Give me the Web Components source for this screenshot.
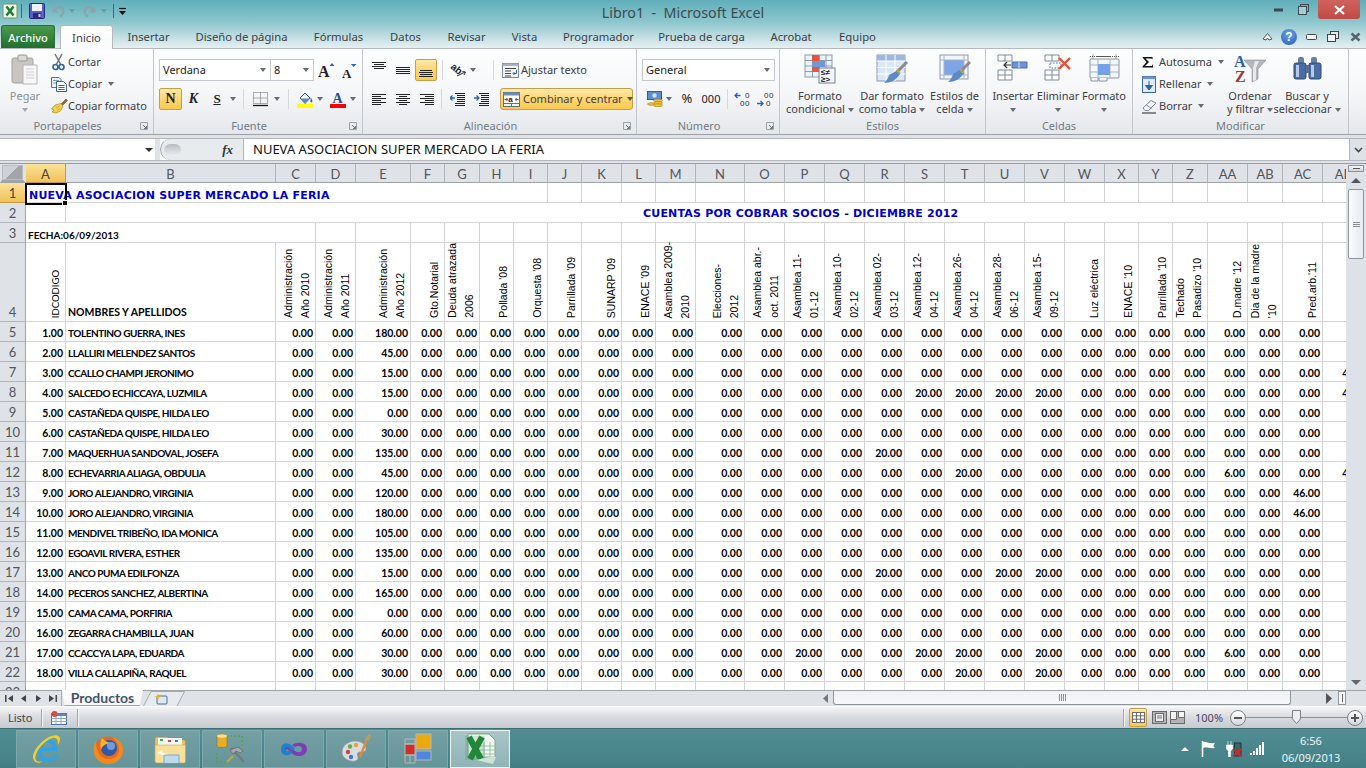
<!DOCTYPE html>
<html lang="es">
<head>
<meta charset="utf-8">
<title>Libro1 - Microsoft Excel</title>
<style>
html, body { margin: 0; padding: 0; height: 100%; overflow: hidden; background: #4d8a90; }
body { font-family: "Noto Sans", sans-serif; }
</style>
</head>
<body>
<x-window></x-window>
<script>
const svg = (w, h, body) => `<svg width="${w}" height="${h}" viewBox="0 0 ${w} ${h}" xmlns="http://www.w3.org/2000/svg" style="flex:none">${body}</svg>`;
const lines = (arr, c = '#222') => arr.map(l => `<path d="M${l[0]} ${l[1]}.5H${l[2]}" stroke="${c}"/>`).join('');

const ICONS = {
    xlsSmall: svg(16, 16, `<rect x="1" y="1" width="14" height="14" rx="1" fill="#eef5ea" stroke="#6f9c62"/><path d="M4.5 3.5 11.5 12.5M11.5 3.5 4.5 12.5" stroke="#1d7a2e" stroke-width="2.4"/>`),
    save: svg(16, 16, `<rect x="0.5" y="0.5" width="15" height="15" rx="1" fill="#5a5fc2" stroke="#26287a"/><rect x="3" y="1" width="10" height="7" fill="#eef1fb"/><rect x="4" y="10" width="8" height="5" fill="#2a2c80"/><rect x="9.5" y="11" width="2" height="3" fill="#c8cbee"/>`),
    undo: svg(13, 14, `<path d="M3 6C5.500 2 10 2 11 6 12 9 10 11.500 8 12.500" fill="none" stroke="#8ba4ab" stroke-width="2.400"/><path d="M0.5 2V8.500H6.500Z" fill="#8ba4ab"/>`),
    redo: svg(13, 14, `<path d="M10 6C7.500 2 3 2 2 6 1 9 3 11.500 5 12.500" fill="none" stroke="#8ba4ab" stroke-width="2.400"/><path d="M12.500 2V8.500H6.500Z" fill="#8ba4ab"/>`),
    qat: svg(9, 9, `<path d="M1 1.5H8" stroke="#111" stroke-width="1.2"/><path d="M1 4H8L4.5 8Z" fill="#111"/>`),
    paste: svg(28, 32, `<rect x="1" y="4" width="21" height="25" rx="2" fill="#c9c6c2" stroke="#a5a29e"/><rect x="7" y="1" width="9" height="6" rx="1" fill="#dcdad7" stroke="#9c9a97"/><path d="M12 11H26V30H12Z" fill="#f7f7f7" stroke="#b5b5b5"/><path d="M15 15H23M15 18H23M15 21H23M15 24H23" stroke="#cfcfcf"/>`),
    cut: svg(15, 18, `<path d="M4 1 9.5 11M11 1 5.5 11" stroke="#6d7480" stroke-width="1.5"/><circle cx="4.5" cy="14" r="2.5" fill="none" stroke="#2e62ad" stroke-width="1.7"/><circle cx="10.5" cy="14" r="2.5" fill="none" stroke="#2e62ad" stroke-width="1.7"/>`),
    copy: svg(16, 16, `<path d="M0.5 1.5H8L10 3.5V11.5H0.5Z" fill="#eef3fb" stroke="#4d74b3"/><path d="M2 4.5H8M2 7H8" stroke="#7d9bcb"/><path d="M5.5 5.5H12.5L15.5 8.5V15.5H5.5Z" fill="#fff" stroke="#3b66ad"/><path d="M7.5 9.5H13.5M7.5 11.5H13.5M7.5 13.5H13.5" stroke="#3b66ad"/>`),
    brush: svg(17, 16, `<path d="M10 6 15 1 16.5 2.5 11.5 7.5Z" fill="#8b6a3a" stroke="#6a4d23" stroke-width=".5"/><path d="M4 7 10 5.5 12 8 9.5 13 5 15 1 14 3 12 0.5 11Z" fill="#f4d24c" stroke="#a98a23" stroke-width=".7"/><path d="M5 10 8.5 8M6 12.5 9.5 10" stroke="#b99a2a" stroke-width=".7"/>`),
    grow: svg(17, 16, `<text x="0" y="15" font-family="Liberation Serif" font-weight="700" font-size="16" fill="#222">A</text><path d="M11.5 4 14 1 16.500 4Z" fill="#2e62ad"/>`),
    shrink: svg(15, 15, `<text x="0" y="14.500" font-family="Liberation Serif" font-weight="700" font-size="13" fill="#222">A</text><path d="M9 1H14.500L11.700 4Z" fill="#2e62ad"/>`),
    borders: svg(15, 15, `<path d="M.5 .5H14.500V11.500H.5ZM7.500 .5V11.500M.5 6H14.500" fill="none" stroke="#666" stroke-dasharray="1 1"/><path d="M0 13.500H15" stroke="#111" stroke-width="1.300"/>`),
    fill: svg(17, 17, `<path d="M3 7 8 2 13 7 8 12.500Z" fill="#f4f5f7" stroke="#3e5f8f"/><path d="M3.500 7.500H12.500L8 12Z" fill="#5c88c5"/><path d="M13.500 6.500C15 8.500 16 9.500 15 11 14 12 13 11 13.500 9.500Z" fill="#2e62ad"/><rect x="0" y="13" width="16" height="4" fill="#ffff00"/>`),
    fontcolor: svg(17, 17, `<text x="2.500" y="12" font-family="Liberation Serif" font-weight="700" font-size="14" fill="#254d8f">A</text><rect x="0" y="13" width="16" height="4" fill="#f00"/>`),
    alTop: svg(14, 9, lines([[0, 0, 14], [2, 2, 12], [0, 4, 14], [2, 6, 12]])),
    alMid: svg(14, 8, lines([[0, 1, 14], [0, 3, 14], [0, 5, 14], [0, 7, 14]])),
    alBot: svg(14, 8, lines([[1, 1, 13], [0, 3, 14], [1, 5, 13], [0, 7, 14]])),
    left: svg(14, 11, lines([[0, 0, 14], [0, 2, 9], [0, 4, 14], [0, 6, 9], [0, 8, 14], [0, 10, 9]])),
    center: svg(14, 11, lines([[0, 0, 14], [3, 2, 11], [0, 4, 14], [3, 6, 11], [0, 8, 14], [3, 10, 11]])),
    right: svg(14, 11, lines([[0, 0, 14], [5, 2, 14], [0, 4, 14], [5, 6, 14], [0, 8, 14], [5, 10, 14]])),
    outdent: svg(15, 13, lines([[5, 0, 15], [7, 2, 15], [7, 4, 15], [7, 6, 15], [7, 8, 15], [5, 10, 15], [5, 12, 15]]) + `<path d="M0 5H5M2.500 2.500 0 5 2.500 7.500" fill="none" stroke="#2e62ad" stroke-width="1.300"/>`),
    indent: svg(15, 13, lines([[5, 0, 15], [7, 2, 15], [7, 4, 15], [7, 6, 15], [7, 8, 15], [5, 10, 15], [5, 12, 15]]) + `<path d="M0 5H5M2.500 2.500 5 5 2.500 7.500" fill="none" stroke="#2e62ad" stroke-width="1.300"/>`),
    orient: svg(18, 16, `<text x="1" y="9" transform="rotate(40 5 6)" font-family="Liberation Sans" font-weight="700" font-size="10" fill="#222">ab</text><path d="M7 14 15 10M12.500 9.500 15.500 10 14 13" fill="none" stroke="#333" stroke-width="1"/>`),
    wrap: svg(17, 15, `<rect x=".5" y=".5" width="16" height="14" fill="#f4f6f9" stroke="#7f8892"/><path d="M.5 .5H16.500V3H.5Z" fill="#a9b3bf"/><path d="M3 5.500H14M3 8H9M3 10.500H9M3 13H9" stroke="#444"/><path d="M14.500 7V10.500H11.500M12.500 9 11 10.500 12.500 12" fill="none" stroke="#2e62ad"/>`),
    merge: svg(17, 15, `<rect x=".5" y=".5" width="16" height="14" fill="#fdfdfd" stroke="#66707c"/><path d="M.5 .5H16.500V3.500H.5Z" fill="#6b8bb9"/><path d="M.5 11.500H16.500M8.500 11.500V14.500" stroke="#66707c"/><text x="5.300" y="10" font-family="Liberation Sans" font-weight="700" font-size="8" fill="#222">a</text><path d="M1.500 7.500H4.500M12.500 7.500H15.500M3.500 6 4.500 7.500 3.500 9M13.500 6 12.500 7.500 13.500 9" fill="none" stroke="#444" stroke-width=".9"/>`),
    currency: svg(17, 16, `<rect x=".5" y=".5" width="14" height="8" fill="#5b8fd0" stroke="#2f5e9f"/><circle cx="7.500" cy="4.500" r="2.200" fill="#cfe0f6"/><ellipse cx="11" cy="9.500" rx="4.500" ry="1.500" fill="#f0c33c" stroke="#a57f12" stroke-width=".6"/><ellipse cx="11" cy="12" rx="4.500" ry="1.500" fill="#f0c33c" stroke="#a57f12" stroke-width=".6"/><ellipse cx="11" cy="14.300" rx="4.500" ry="1.500" fill="#f0c33c" stroke="#a57f12" stroke-width=".6"/><ellipse cx="4" cy="13" rx="3.500" ry="1.300" fill="#f0c33c" stroke="#a57f12" stroke-width=".6"/>`),
    decUp: svg(19, 16, `<path d="M1 4.500H6.500M3.500 2 1 4.500 3.500 7" fill="none" stroke="#2e62ad" stroke-width="1.300"/><text x="11" y="7" font-family="Liberation Sans" font-size="8" fill="#333">0</text><text x="6" y="15" font-family="Liberation Sans" font-size="8" letter-spacing=".5" fill="#333">00</text>`),
    decDown: svg(19, 16, `<text x="8" y="7" font-family="Liberation Sans" font-size="8" letter-spacing=".5" fill="#333">00</text><path d="M1 12.500H7M4.500 10 7 12.500 4.500 15" fill="none" stroke="#2e62ad" stroke-width="1.300"/><text x="10" y="15" font-family="Liberation Sans" font-size="8" fill="#333">0</text>`),
    cond: svg(32, 30, `<rect x="1" y="1" width="27" height="22" fill="#eef3fa" stroke="#8b9bb2"/><path d="M8.500 1V23M15.500 1V23M22 1V23M1 6.500H28M1 12H28M1 17.500H28" stroke="#8b9bb2"/><rect x="8" y="1" width="7" height="6" fill="#e8533c"/><rect x="8" y="7" width="13" height="6" fill="#6f98d8"/><rect x="8" y="13" width="7" height="5" fill="#e8533c"/><rect x="15" y="14" width="16" height="15" fill="#f3f5f7" stroke="#7a8290"/><text x="17" y="21" font-family="Liberation Sans" font-size="8" font-weight="700" fill="#222">≤≠</text><text x="17" y="28" font-family="Liberation Sans" font-size="8" font-weight="700" fill="#222">≥&gt;</text>`),
    table: svg(32, 30, `<rect x="1" y="1" width="28" height="26" fill="#dbe6f6" stroke="#8b9bb2"/><path d="M1 1H29V7H1Z" fill="#9db8e0"/><path d="M10 1V27M19 1V27M1 7H29M1 13.500H29M1 20H29" stroke="#fff"/><path d="M31 8 21 18" stroke="#8a8a8a" stroke-width="3"/><path d="M22 16 13 21C12 25 10 27 8 29 15 29 20 26 24 20Z" fill="#5d89c7"/><path d="M21 16 24 20" stroke="#c4a24a" stroke-width="2"/>`),
    styles: svg(32, 30, `<rect x="1" y="1" width="28" height="24" fill="#f2f5fa" stroke="#8b9bb2"/><rect x="5" y="6" width="20" height="15" fill="#7fa5e6"/><path d="M1 6H29M1 21H29M5 1V25M25 1V25" stroke="#a9b6c9"/><path d="M31 8 22 17" stroke="#8a8a8a" stroke-width="3"/><path d="M22 15 14 20C13 24 11 26 9 28 16 28 21 25 25 19Z" fill="#5d89c7"/><path d="M21 15 24 19" stroke="#c4a24a" stroke-width="2"/>`),
    insert: svg(32, 28, `<path d="M1 1H15V7H1ZM8 1V7M1 16H15V26H1ZM8 16V26M1 21H15" fill="#fff" stroke="#7f8b99"/><path d="M15 8H30V14H15Z" fill="#6e93d6" stroke="#4a6eab"/><path d="M22 8V14" stroke="#dbe5f6"/><path d="M7 11H14M10 8 7 11 10 14" fill="none" stroke="#333" stroke-width="1.200"/>`),
    remove: svg(28, 28, `<path d="M1 1H15V7H1ZM8 1V7M1 16H15V26H1ZM8 16V26M1 21H15" fill="#fff" stroke="#7f8b99"/><path d="M6 9H17V14H6Z" fill="none" stroke="#4a6eab" stroke-dasharray="1.500 1.500"/><path d="M15 4 26 15M26 4 15 15" stroke="#ef4b2f" stroke-width="2.400"/>`),
    format: svg(31, 28, `<path d="M1 2.500H30M4 .5V5M27 .5V5" stroke="#555" stroke-dasharray="1 1"/><path d="M8 2.500H22" stroke="#555"/><rect x="1" y="5" width="29" height="19" rx="1" fill="#f3f6fb" stroke="#8b95a3"/><path d="M9 5V24M21 5V24M1 11H30M1 18H30" stroke="#a9b3c0"/><rect x="9" y="10" width="12" height="11" fill="#75a1e6"/><path d="M2 24V27H9V24M10 24V27H18V24" fill="#f3f6fb" stroke="#8b95a3"/>`),
    sigma: svg(12, 12, `<path d="M1 1H10.500V3.500L9.500 2.500H3.500L7 6 3 10H10L11 8V11.500H.5V10.500L4.500 6 .5 1.500Z" fill="#111"/>`),
    rellenar: svg(14, 17, `<rect x=".5" y=".5" width="13" height="16" fill="#dfeafa" stroke="#3c66ab"/><path d="M.5 .5H13.500V3H.5Z" fill="#6e93d6"/><path d="M7 5V10M3.500 9.500H10.500L7 14Z" fill="#2e62ad" stroke="#2e62ad"/>`),
    eraser: svg(15, 15, `<path d="M1 9 9 1.500 14 4 6.500 11.500H3Z" fill="#f4f5f8" stroke="#7c8797"/><path d="M4.500 6 9.500 9.500" stroke="#7c8797"/><path d="M0 14H14" stroke="#222"/>`),
    sort: svg(32, 30, `<text x="0" y="13" font-family="Liberation Serif" font-weight="700" font-size="16" fill="#2a5dab">A</text><text x="1" y="28" font-family="Liberation Serif" font-weight="700" font-size="16" fill="#a03a32">Z</text><path d="M10 6H32L24 15V25L18 28V15Z" fill="#b3b6ba" stroke="#8d9094" stroke-width=".6"/><path d="M21 7 25 7 22 14V26L19 27V14Z" fill="#e8e9eb"/>`),
    binoculars: svg(29, 27, `<rect x="5" y="3" width="6" height="7" rx="2" fill="#6b7fa4"/><rect x="18" y="3" width="6" height="7" rx="2" fill="#6b7fa4"/><rect x="1" y="9" width="12" height="16" rx="2" fill="#4a6da6" stroke="#2d4a7d"/><rect x="16" y="9" width="12" height="16" rx="2" fill="#4a6da6" stroke="#2d4a7d"/><rect x="3" y="11" width="3" height="12" fill="#b8cbe6"/><rect x="18" y="11" width="3" height="12" fill="#b8cbe6"/><rect x="13" y="11" width="3" height="8" fill="#5a6f93"/>`),
    launcher: svg(8, 8, `<path d="M.5 .5H7.500V7.500H.5Z" fill="none" stroke="#9aa2ab"/><path d="M3 3 6.500 6.500M6.500 4V6.500H4" fill="none" stroke="#6d7580"/>`),
    macro: svg(17, 14, `<rect x=".5" y="2.500" width="15" height="11" fill="#fff" stroke="#4a6eab"/><path d="M.5 2.500H15.500V5H.5Z" fill="#5c86c8"/><path d="M5 5V13.500M10 5V13.500M.5 7.500H15.500M.5 10.500H15.500" stroke="#8ba7d3"/><circle cx="3.500" cy="3" r="3" fill="#d94b3a"/>`),
    viewNormal: svg(13, 11, `<rect x=".5" y=".5" width="12" height="10" fill="#fff" stroke="#6a6a6a"/><path d="M4.500 .5V10.500M8.500 .5V10.500M.5 3.800H12.500M.5 7.200H12.500" stroke="#6a6a6a"/>`),
    viewLayout: svg(15, 13, `<rect x=".5" y=".5" width="14" height="12" fill="#b5b5b5" stroke="#6a6a6a"/><rect x="3.500" y="2.500" width="8" height="8" fill="#eee" stroke="#6a6a6a"/><path d="M5 5H10M5 7H10" stroke="#777"/>`),
    viewBreak: svg(15, 13, `<rect x=".5" y=".5" width="14" height="12" fill="#b5b5b5" stroke="#6a6a6a"/><path d="M.5 .5H6.500V8.500H.5ZM8.500 .5H14.500V6.500H8.500Z" fill="#f4f4f4" stroke="#6a6a6a"/>`),
    ie: svg(32, 32, `<path d="M8 17C8 9 14 6 18 6 24 6 27 11 27 18H11C11 23 16 26 20.500 25 23 24.500 24 23 25 21.500H27.500C25.500 27 21 29 17 29 11 29 8 24 8 17ZM11.500 14.500H22.500C22 11 20 9.500 17 9.500 14 9.500 12 11.500 11.500 14.500Z" fill="#2ea3e6"/><path d="M4 27C0 22 9 9 19 4 24 1.500 30 1 30 6 30 8 29 10 28 12 28 9 28 4 23 5 14 7 3 21 6 27 7 29 10 29 13 28 9 31 5 30 4 27Z" fill="#f3cf2d"/>`),
    firefox: svg(32, 32, `<circle cx="16" cy="17" r="13.500" fill="#e8681f"/><circle cx="17" cy="15" r="8" fill="#2c5aa8"/><circle cx="19" cy="13" r="4" fill="#6b9be0"/><path d="M4 8C4 18 8 26 17 26 23 26 27 22 27 16 27 10 23 5 18 4 24 4 31 9 31 17 31 25 25 31 16 31 8 31 1.500 25 1.500 16 1.500 12 3 10 4 8Z" fill="#f28a1c"/><path d="M10 5C13 8 15 9 18 10 13 11 10 13 9 17 8 12 8 8 10 5Z" fill="#f7b32b"/>`),
    folder: svg(32, 30, `<path d="M1 5C1 4 2 3 3 3H13L15 6H30C31 6 31.500 7 31.500 8V12H1Z" fill="#e6c56a" stroke="#b39440" stroke-width=".6"/><rect x="4" y="4" width="24" height="8" fill="#f9f9f4"/><rect x="6" y="5" width="3" height="2" fill="#3cb054"/><rect x="14" y="6" width="3" height="2" fill="#d9413a"/><rect x="21" y="6" width="3" height="2" fill="#3c7cd9"/><path d="M1 11H31.500V27C31.500 28 31 29 30 29H3C2 29 1 28 1 27Z" fill="#f7e19a" stroke="#c4a24a" stroke-width=".6"/><path d="M10 29V21H25V29" fill="#bfd9ef" stroke="#7aa6c9"/><path d="M3 19 8 16 9 19 14 20 9 21Z" fill="#fff" opacity=".9"/>`),
    dbtools: svg(32, 32, `<path d="M1 3C1 1 11 1 11 3V13C11 15 1 15 1 13Z" fill="#e5ad29" stroke="#96701a" stroke-width=".6"/><ellipse cx="6" cy="3" rx="5" ry="1.800" fill="#f8de8b"/><path d="M14 3H26V13M1 20V29H13" fill="none" stroke="#52a642" stroke-width="1.500" stroke-dasharray="2 2"/><path d="M15 15 28 29" stroke="#777" stroke-width="2"/><path d="M17 23 11 29" stroke="#d6a032" stroke-width="2.200"/><path d="M14 17 22 14 27 18 24 20 20 18 17 21Z" fill="#a7a9ad" stroke="#555" stroke-width=".6"/>`),
    vs: svg(32, 22, `<path d="M4 11C4 7 8 6 11 8L17 13C20 15 24 15 24 11 24 8 20 7 17 9L14 7C19 3 29 4 29 11 29 18 20 20 15 16L10 12C8 11 7.500 12 8 13 8.500 14 10 14 11 13L13.500 15C10 18 4 17 4 11Z" fill="#7b3fb5"/><path d="M3 11C3 5 10 4 14 8L17 10.500 14.500 12.500 11 9.500C9 8 6.500 9 7 11.500 7.500 14 10 14 12 12.500L14.500 14.500C10 19 3 18 3 11Z" fill="#1f7fd1"/>`),
    palette: svg(32, 32, `<path d="M2 19C2 12 9 8 15 8 21 8 26 11 26 16 26 19 22 19 20 19 17 19 17 22 18 24 19 27 15 29 11 28 6 27 2 24 2 19Z" fill="#d8dde3" stroke="#8a97a6" stroke-width=".7"/><circle cx="8" cy="19" r="2.200" fill="#d6413a"/><circle cx="10" cy="13.500" r="2.200" fill="#58b04a"/><circle cx="16" cy="12" r="2.200" fill="#e3a927"/><circle cx="11" cy="24" r="2.200" fill="#3d78c8"/><path d="M27 6 20 24" stroke="#e8892c" stroke-width="2.400"/><path d="M25 7C26 3 28 1 31 1 31 4 30 7 28 8Z" fill="#b79b6e"/>`),
    squares: svg(28, 31, `<rect x="12" y="1" width="15" height="15" fill="#e9a90f" stroke="#b7b7b7"/><rect x="1" y="11" width="10" height="11" fill="#cf2f28" stroke="#b7b7b7"/><rect x="12" y="18" width="15" height="9" fill="#4f86e0" stroke="#b7b7b7"/><path d="M1 6H11V11H1ZM1 22H11V30H1ZM6 22V30" fill="none" stroke="#b7b7b7"/>`),
    xlsBig: svg(32, 32, `<path d="M4 1H25L31 7V24H4Z" fill="#f3f7f2" stroke="#7ca486"/><path d="M14 13H32M14 17H32M14 21H32M20 9V25M26 9V25" stroke="#9cc2a5"/><path d="M1 3H21V27H1Z" fill="#2c8a41" opacity=".18"/><path d="M5 4 17 26M18 4 6 26" stroke="#21863a" stroke-width="6"/><path d="M12 27 29 31 32 24 29 23 12 27" fill="#cfe3d4"/>`),
    trayFlag: svg(15, 16, `<path d="M1.500 0V16" stroke="#fff" stroke-width="1.500"/><path d="M2 1C5 0 7 3 14 2 12 5 12 5 14 7 8 8 6 5 2 7Z" fill="#fff"/>`),
    trayPower: svg(17, 16, `<path d="M3 0V4M6 0V4M1.500 4H7.500V8L5.500 10V16H3.500V10L1.500 8Z" fill="#fff" stroke="#fff" stroke-width=".6"/><rect x="9.500" y="2" width="6.500" height="13" fill="#3c6468" stroke="#20383c"/><path d="M8 8 16 15M16 8 8 15" stroke="#e01f1f" stroke-width="2"/>`),
    traySignal: svg(15, 13, `<rect x="0" y="11" width="2" height="2" fill="#fff"/><rect x="3" y="9" width="2" height="4" fill="#fff"/><rect x="6" y="6" width="2" height="7" fill="#fff"/><rect x="9" y="3" width="2" height="10" fill="#fff"/><rect x="12" y="0" width="2" height="13" fill="#fff"/>`),
};

// colours used by more than one element
const TEXT = '#3b4046';
const HOT = 'linear-gradient(#fde9a8, #fcd670 50%, #f9c950)';
const UI_FONT = '"Noto Sans", "Open Sans", sans-serif';

class Base extends HTMLElement {
    constructor() {
        super();
        this.attachShadow({mode: 'open'});
    }
    connectedCallback() {
        this.render();
    }
}

class RibbonTabs extends Base {
    render() {
        const tabs = [['Insertar', 67], ['Diseño de página', 119], ['Fórmulas', 75], ['Datos', 59], ['Revisar', 63], ['Vista', 53],
            ['Programador', 95], ['Prueba de carga', 111], ['Acrobat', 68], ['Equipo', 65]];
        this.shadowRoot.innerHTML = `
            <style>
            :host { display: flex; height: 23px; padding-left: 1px; font: 11.250px ${UI_FONT}; color: ${TEXT}; position: relative; z-index: 1; }
            div { display: flex; align-items: center; justify-content: center; box-sizing: border-box; flex: none; white-space: nowrap; }
            .file { width: 54px; color: #fff; font-size: 11px; font-weight: 500; background: linear-gradient(#4c9a4e, #20702c); border: 1px solid #2b6a33; border-bottom: 0; border-radius: 3px 3px 0 0; margin-right: 5px; }
            .home { width: 53px; height: 24px; background: linear-gradient(#fff, #fafbfc); border: 1px solid #b4b9bf; border-bottom: 0; border-radius: 3px 3px 0 0; margin-right: 2px; }
            .help { margin-left: auto; gap: 0; }
            .help span { display: flex; align-items: center; justify-content: center; width: 22px; }
            .q { width: 16px; height: 16px; border-radius: 50%; background: radial-gradient(circle at 50% 30%, #6aa0e8, #2a60b8); color: #fff; font: bold 12px "Liberation Sans", sans-serif; }
            .help .q { width: 16px; margin: 0 3px; }
            </style>
            <div class="file">Archivo</div><div class="home">Inicio</div>
            ${tabs.map(t => `<div style="width:${t[1]}px">${t[0]}</div>`).join('')}
            <div class="help">
                <span>${svg(11, 9, '<path d="M1 7 5.500 1.500 10 7 7 8 5.500 6 4 8Z" fill="#f4f7f8" stroke="#444" stroke-width=".9"/>')}</span>
                <span class="q">?</span>
                <span>${svg(11, 6, '<rect x=".5" y=".5" width="10" height="5" rx="1" fill="#eef3f5" stroke="#444"/>')}</span>
                <span>${svg(12, 11, '<rect x="3.500" y=".5" width="8" height="7" fill="#dfeaed" stroke="#444"/><rect x=".5" y="3.500" width="8" height="7" fill="#eef3f5" stroke="#444"/>')}</span>
                <span>${svg(11, 10, '<path d="M1.500 1.500 9.500 8.500M9.500 1.500 1.500 8.500" stroke="#55636a" stroke-width="2.400"/>')}</span>
            </div>
        `;
    }
}

class TitleBar extends Base {
    render() {
        this.shadowRoot.innerHTML = `
            <style>
            :host { display: grid; grid-template-columns: 1fr auto 1fr; height: 25px; font: 14.250px ${UI_FONT}; color: #3d4a50; }
            .qat { display: flex; align-items: center; height: 22px; padding-left: 2px; }
            .qat i { display: block; width: 1px; height: 14px; background: #3e6b73; }
            .dd { width: 0; height: 0; border: 3px solid transparent; border-top: 4px solid #6f9aa3; border-bottom: 0; }
            .title { line-height: 25px; white-space: pre; }
            .ctl { display: flex; justify-content: flex-end; align-items: flex-start; padding-right: 6px; }
            .ctl span { display: flex; align-items: center; justify-content: center; height: 19px; }
            .close { width: 42px; margin-left: 2px; background: linear-gradient(#d0625d, #c04a45); border-radius: 0 0 3px 3px; }
            </style>
            <div class="qat">
                ${ICONS.xlsSmall}<i style="margin:0 7px 0 3px"></i>${ICONS.save}
                <span style="margin-left:7px;display:flex">${ICONS.undo}</span><b class="dd" style="margin-left:4px"></b>
                <span style="margin-left:8px;display:flex">${ICONS.redo}</span><b class="dd" style="margin-left:5px"></b>
                <i style="margin:0 4px 0 6px"></i>${ICONS.qat}
            </div>
            <div class="title">Libro1  -  Microsoft Excel</div>
            <div class="ctl">
                <span style="width:25px">${svg(9, 4, '<rect width="9" height="3" y=".5" fill="#3c4a50"/>')}</span>
                <span style="width:25px">${svg(11, 11, '<rect x="2.500" y=".5" width="8" height="7" fill="none" stroke="#3c4a50"/><rect x=".5" y="2.500" width="8" height="8" fill="#a3cfd4" stroke="#3c4a50"/>')}</span>
                <span class="close">${svg(11, 10, '<path d="M1 1 10 9M10 1 1 9" stroke="#fff" stroke-width="2.200"/>')}</span>
            </div>
        `;
    }
}

class RibbonGroup extends Base {
    render() {
        const launcher = this.hasAttribute('launcher');
        this.shadowRoot.innerHTML = `
            <style>
            :host { display: flex; flex-direction: column; flex: none; box-sizing: border-box; width: ${this.getAttribute('w')}px; height: 85px; border-right: 1px solid #c3c7cc; }
            .body { display: flex; height: 70px; flex: none; }
            .label { display: flex; height: 15px; align-items: center; font-size: 11px; color: #717b85; padding-bottom: 2px; box-sizing: border-box; }
            .label span { flex: 1; text-align: center; }
            .label i { display: flex; width: 18px; padding-left: 5px; box-sizing: border-box; }
            </style>
            <div class="body"><slot></slot></div>
            <div class="label"><span>${this.getAttribute('label')}</span>${launcher ? `<i>${ICONS.launcher}</i>` : ''}</div>
        `;
    }
}

class LargeButton extends Base {
    render() {
        const label = this.getAttribute('label').split('|');
        const muted = this.hasAttribute('muted');
        this.shadowRoot.innerHTML = `
            <style>
            :host { display: flex; flex-direction: column; align-items: center; flex: none; width: ${this.getAttribute('w')}px; padding-top: 5px; font-size: 11px; line-height: 13px; color: ${muted ? '#8b9096' : TEXT}; white-space: nowrap; }
            .ic { display: flex; height: 35px; align-items: flex-start; justify-content: center; flex: none; }
            .ln { display: flex; justify-content: center; align-items: center; gap: 3px; height: 13px; width: 100%; }
            b { display: block; flex: none; width: 0; height: 0; border: 3px solid transparent; border-top: 4px solid ${muted ? '#a2a6ab' : '#676c72'}; border-bottom: 0; margin-top: 2px; }
            </style>
            <div class="ic">${ICONS[this.getAttribute('icon')]}</div>
            ${label.map((l, i) => `<div class="ln">${l}${i === label.length - 1 && label.length > 1 && this.getAttribute('caret') === 'inline' ? '<b></b>' : ''}</div>`).join('')}
            ${this.getAttribute('caret') === 'below' ? '<div class="ln"><b></b></div>' : ''}
        `;
    }
}

class SmallButton extends Base {
    render() {
        this.shadowRoot.innerHTML = `
            <style>
            :host { display: flex; align-items: center; height: 22px; font-size: 11px; color: ${TEXT}; white-space: nowrap; }
            span { display: flex; width: 17px; flex: none; }
            em { font-style: normal; padding-bottom: 2px; }
            b { display: block; width: 0; height: 0; border: 3px solid transparent; border-top: 4px solid #676c72; border-bottom: 0; margin-left: 6px; }
            </style>
            <span>${ICONS[this.getAttribute('icon')]}</span><em>${this.getAttribute('label')}</em>${this.hasAttribute('caret') ? '<b></b>' : ''}
        `;
    }
}

// a square tool: one icon, a letter or a caret
class Tool extends Base {
    render() {
        const on = this.hasAttribute('on');
        const icon = this.getAttribute('icon');
        this.shadowRoot.innerHTML = `
            <style>
            :host { display: flex; align-items: center; justify-content: center; box-sizing: border-box; flex: none; width: ${this.getAttribute('w') || 24}px; height: 22px; color: #222;
                ${on ? `background: ${HOT}; border: 1px solid #c2a04a; border-radius: 2px;` : ''} }
            </style>
            ${icon ? ICONS[icon] : '<slot></slot>'}
        `;
    }
}

class Caret extends Base {
    render() {
        this.shadowRoot.innerHTML = `
            <style>
            :host { display: flex; align-items: center; justify-content: center; flex: none; width: ${this.getAttribute('w') || 8}px; height: 22px; }
            b { display: block; width: 0; height: 0; border: 3px solid transparent; border-top: 4px solid #676c72; border-bottom: 0; }
            </style><b></b>
        `;
    }
}

class Combo extends Base {
    render() {
        this.shadowRoot.innerHTML = `
            <style>
            :host { display: flex; align-items: center; box-sizing: border-box; flex: none; width: ${this.getAttribute('w')}px; height: 22px; background: #fff; border: 1px solid #c5c9cf; padding: 0 4px 0 3px; font-size: 11px; color: #222; justify-content: space-between; }
            em { font-style: normal; padding-bottom: 2px; }
            b { display: block; width: 0; height: 0; border: 3px solid transparent; border-top: 4px solid #676c72; border-bottom: 0; }
            </style><em>${this.getAttribute('value')}</em><b></b>
        `;
    }
}

class Ribbon extends Base {
    render() {
        this.shadowRoot.innerHTML = `
            <style>
            :host { display: flex; box-sizing: border-box; height: 87px; border-top: 1px solid #b5babf; border-bottom: 1px solid #9da1a6; background: linear-gradient(#fcfdfd, #f6f7f9 50%, #e4e7eb); font-family: ${UI_FONT}; color: ${TEXT}; }
            .col { display: flex; flex-direction: column; padding-top: 2px; flex: none; }
            .rows { display: flex; flex-direction: column; gap: 7px; padding-top: 10px; flex: none; }
            .row { display: flex; align-items: center; height: 22px; }
            .sep { flex: none; width: 1px; height: 20px; background: #d5d8dc; }
            .txt { font-size: 11px; white-space: nowrap; padding-bottom: 2px; }
            .l { font-family: "Liberation Serif", serif; font-weight: 700; font-style: normal; font-size: 14px; }
            </style>
            <x-group w="154" label="Portapapeles" launcher>
                <x-large w="40" icon="paste" label="Pegar" caret="below" muted style="margin-left:5px"></x-large>
                <div class="col" style="margin-left:6px">
                    <x-small icon="cut" label="Cortar"></x-small>
                    <x-small icon="copy" label="Copiar" caret></x-small>
                    <x-small icon="brush" label="Copiar formato"></x-small>
                </div>
            </x-group>
            <x-group w="209" label="Fuente" launcher>
                <div class="rows" style="margin-left:5px">
                    <div class="row">
                        <x-combo w="112" value="Verdana"></x-combo><x-combo w="44" value="8" style="margin-left:-1px"></x-combo>
                        <x-tool w="20" icon="grow" style="margin-left:2px"></x-tool><x-tool w="19" icon="shrink" style="margin-left:4px"></x-tool>
                    </div>
                    <div class="row">
                        <x-tool w="23" on><span class="l">N</span></x-tool>
                        <x-tool w="23"><span class="l" style="font-style:italic">K</span></x-tool>
                        <x-tool w="24"><span class="l" style="text-decoration:underline;font-size:13px">S</span></x-tool>
                        <x-caret></x-caret><div class="sep" style="margin:0 9px 0 6px"></div>
                        <x-tool w="15" icon="borders"></x-tool><x-caret style="margin-left:5px"></x-caret><div class="sep" style="margin:0 8px 0 7px"></div>
                        <x-tool w="16" icon="fill"></x-tool><x-caret style="margin-left:3px"></x-caret>
                        <x-tool w="16" icon="fontcolor" style="margin-left:6px"></x-tool><x-caret style="margin-left:3px"></x-caret>
                    </div>
                </div>
            </x-group>
            <x-group w="274" label="Alineación" launcher>
                <div class="rows" style="margin-left:4px">
                    <div class="row">
                        <x-tool icon="alTop" style="padding-bottom:8px"></x-tool><x-tool icon="alMid"></x-tool><x-tool w="22" on icon="alBot" style="padding-top:6px"></x-tool>
                        <div class="sep" style="margin:0 6px 0 5px"></div>
                        <x-tool w="20" icon="orient"></x-tool><x-caret w="7"></x-caret>
                        <div class="sep" style="margin:0 7px 0 17px"></div>
                        <x-tool w="19" icon="wrap"></x-tool><span class="txt" style="margin-left:1px">Ajustar texto</span>
                    </div>
                    <div class="row">
                        <x-tool icon="left"></x-tool><x-tool icon="center"></x-tool><x-tool w="23" icon="right"></x-tool>
                        <div class="sep" style="margin:0 3px 0 3px"></div>
                        <x-tool icon="outdent"></x-tool><x-tool icon="indent"></x-tool>
                        <x-merge style="margin-left:7px"></x-merge>
                    </div>
                </div>
            </x-group>
            <x-group w="143" label="Número" launcher>
                <div class="rows" style="margin-left:5px">
                    <div class="row"><x-combo w="133" value="General"></x-combo></div>
                    <div class="row">
                        <x-tool w="17" icon="currency" style="margin-left:5px"></x-tool><x-caret style="margin-left:1px"></x-caret>
                        <x-tool w="24" style="margin-left:2px"><span class="txt" style="font-size:13px">%</span></x-tool>
                        <x-tool w="24"><span class="txt">000</span></x-tool>
                        <div class="sep" style="margin:0 6px 0 4px"></div>
                        <x-tool w="19" icon="decUp"></x-tool><x-tool w="19" icon="decDown" style="margin-left:3px"></x-tool>
                    </div>
                </div>
            </x-group>
            <x-group w="206" label="Estilos">
                <x-large w="80" icon="cond" label="Formato|condicional" caret="inline"></x-large>
                <x-large w="64" icon="table" label="Dar formato|como tabla" caret="inline"></x-large>
                <x-large w="61" icon="styles" label="Estilos de|celda" caret="inline"></x-large>
            </x-group>
            <x-group w="147" label="Celdas">
                <x-large w="50" icon="insert" label="Insertar" caret="below" style="margin-left:2px"></x-large>
                <x-large w="40" icon="remove" label="Eliminar" caret="below"></x-large>
                <x-large w="52" icon="format" label="Formato" caret="below"></x-large>
            </x-group>
            <x-group w="216" label="Modificar">
                <div class="col" style="margin-left:9px;width:86px">
                    <x-small icon="sigma" label="Autosuma" caret></x-small>
                    <x-small icon="rellenar" label="Rellenar" caret></x-small>
                    <x-small icon="eraser" label="Borrar" caret></x-small>
                </div>
                <x-large w="44" icon="sort" label="Ordenar|y filtrar" caret="inline"></x-large>
                <x-large w="70" icon="binoculars" label="Buscar y|seleccionar" caret="inline"></x-large>
            </x-group>
        `;
    }
}

class MergeButton extends Base {
    render() {
        this.shadowRoot.innerHTML = `
            <style>
            :host { display: flex; align-items: center; box-sizing: border-box; flex: none; width: 133px; height: 22px; background: ${HOT}; border: 1px solid #c2a04a; border-radius: 3px; padding-left: 2px; font-size: 11px; color: ${TEXT}; white-space: nowrap; }
            span { flex: 1; margin-left: 3px; padding-bottom: 2px; }
            i { width: 1px; height: 20px; background: #c2a04a; }
            b { display: block; width: 0; height: 0; border: 3px solid transparent; border-top: 4px solid #555; border-bottom: 0; margin: 0 4px 0 4px; }
            </style>${ICONS.merge}<span>Combinar y centrar</span><i></i><b></b>
        `;
    }
}

class FormulaBar extends Base {
    render() {
        this.shadowRoot.innerHTML = `
            <style>
            :host { display: flex; box-sizing: border-box; height: 29px; padding-top: 3px; background: #dfe3e8; border-bottom: 1px solid #9a9da1; }
            .row { display: flex; height: 21px; width: 100%; background: #fff; border-top: 1px solid #b3b7bc; border-bottom: 1px solid #b3b7bc; box-sizing: content-box; }
            .name { width: 155px; display: flex; align-items: center; justify-content: flex-end; padding-right: 2px; box-sizing: border-box; }
            .name b { width: 0; height: 0; border: 4px solid transparent; border-top: 4px solid #333; border-bottom: 0; }
            .gap { width: 5px; background: #dfe3e8; }
            .gad { width: 84px; display: flex; align-items: center; justify-content: flex-end; box-sizing: border-box; padding-right: 10px; border-radius: 11px 0 0 11px; border-left: 1px solid #9ea3a9; background: #e8ebee; border-right: 1px solid #b3b7bc; font: italic bold 13px "Liberation Serif", serif; color: #333; position: relative; }
            .dot { flex: none; width: 17px; height: 12px; border-radius: 6px; background: linear-gradient(#b9bdc2, #eceef0); margin-right: auto; margin-left: 3px; }
            .val { flex: 1; padding-left: 9px; font: 13px/21px ${UI_FONT}; color: #111; white-space: nowrap; }
            .exp { width: 16px; display: flex; align-items: center; justify-content: center; background: #dfe3e8; border-left: 1px solid #b3b7bc; }
            </style>
            <div class="row">
                <div class="name"><b></b></div><div class="gap"></div>
                <div class="gad"><span class="dot"></span>fx</div>
                <div class="val">NUEVA ASOCIACION SUPER MERCADO LA FERIA</div>
                <div class="exp">${svg(9, 6, '<path d="M1 1 4.500 4.500 8 1" fill="none" stroke="#444" stroke-width="1.600"/>')}</div>
            </div>
        `;
    }
}

class Sheet extends Base {
    render() {
        const cols = [['A', 40], ['B', 210], ['C', 40], ['D', 40], ['E', 55], ['F', 34], ['G', 35], ['H', 34], ['I', 34], ['J', 34], ['K', 40], ['L', 34], ['M', 40], ['N', 49],
            ['O', 40], ['P', 40], ['Q', 40], ['R', 40], ['S', 40], ['T', 40], ['U', 40], ['V', 40], ['W', 40], ['X', 34], ['Y', 34], ['Z', 35], ['AA', 40], ['AB', 35], ['AC', 40], ['AD', 43]];
        const heads = {
            A: 'IDCODIGO', C: 'Administración\nAño 2010', D: 'Administración\nAño 2011', E: 'Administración\nAño 2012', F: 'Gto.Notarial', G: 'Deuda atrazada\n2006',
            H: "Pollada '08", I: "Orquesta '08", J: "Parrillada '09", K: "SUNARP '09", L: "ENACE '09", M: 'Asamblea 2009-\n2010', N: 'Elecciones-\n2012', O: 'Asamblea abr.-\noct. 2011',
            P: 'Asamblea 11-\n01-12', Q: 'Asamblea 10-\n02-12', R: 'Asamblea 02-\n03-12', S: 'Asamblea 12-\n04-12', T: 'Asamblea 26-\n04-12', U: 'Asamblea 28-\n06-12', V: 'Asamblea 15-\n09-12',
            W: 'Luz eléctrica', X: "ENACE '10", Y: "Parrillada '10", Z: "Techado\nPasadizo '10", AA: "D.madre  '12", AB: "Dia de la madre\n'10", AC: "Pred.arb.'11",
        };
        const people = [
            ['TOLENTINO GUERRA, INES', {E: 180}], ['LLALLIRI MELENDEZ SANTOS', {E: 45}], ['CCALLO CHAMPI JERONIMO', {E: 15, AD: 4}],
            ['SALCEDO ECHICCAYA, LUZMILA', {E: 15, S: 20, T: 20, U: 20, V: 20, AD: 4}], ['CASTAÑEDA QUISPE, HILDA LEO', {}], ['CASTAÑEDA QUISPE, HILDA LEO', {E: 30}],
            ['MAQUERHUA SANDOVAL, JOSEFA', {E: 135, R: 20}], ['ECHEVARRIA ALIAGA, OBDULIA', {E: 45, T: 20, AA: 6, AD: 4}], ['JORO ALEJANDRO, VIRGINIA', {E: 120, AC: 46}],
            ['JORO ALEJANDRO, VIRGINIA', {E: 180, AC: 46}], ['MENDIVEL TRIBEÑO, IDA MONICA', {E: 105}], ['EGOAVIL RIVERA, ESTHER', {E: 135}],
            ['ANCO PUMA EDILFONZA', {E: 15, R: 20, U: 20, V: 20}], ['PECEROS SANCHEZ, ALBERTINA', {E: 165}], ['CAMA CAMA, PORFIRIA', {}],
            ['ZEGARRA CHAMBILLA, JUAN', {E: 60}], ['CCACCYA LAPA, EDUARDA', {E: 30, P: 20, S: 20, T: 20, V: 20, AA: 6}], ['VILLA CALLAPIÑA, RAQUEL', {E: 30, T: 20, V: 20}],
        ];

        let html = '<div class="corner"></div>';
        cols.forEach((c, i) => { html += `<div class="ch${i === 0 ? ' sel' : ''}">${c[0]}</div>`; });

        html += '<div class="rh sel">1</div><div class="c t1" style="grid-column:span 9">NUEVA ASOCIACION SUPER MERCADO LA FERIA</div>';
        cols.slice(9).forEach(() => { html += '<div class="c"></div>'; });

        html += '<div class="rh">2</div><div class="c"></div><div class="c t2" style="grid-column:span 29">CUENTAS POR COBRAR SOCIOS - DICIEMBRE 2012</div>';

        html += '<div class="rh">3</div><div class="c t3" style="grid-column:span 3">FECHA:06/09/2013</div>';
        cols.slice(3).forEach(() => { html += '<div class="c"></div>'; });

        html += '<div class="rh rh4">4</div>';
        cols.forEach(c => {
            if (c[0] === 'B') {
                html += '<div class="c nh">NOMBRES Y APELLIDOS</div>';
            } else {
                const cls = c[0] === 'A' ? 'rot id' : 'rot';
                html += `<div class="c hd"><span class="${cls}">${(heads[c[0]] || '').replace(/\n/g, '<br>')}</span></div>`;
            }
        });

        people.forEach((p, idx) => {
            html += `<div class="rh">${idx + 5}</div>`;
            cols.forEach(c => {
                if (c[0] === 'A') {
                    html += `<div class="c n">${(idx + 1).toFixed(2)}</div>`;
                } else if (c[0] === 'B') {
                    html += `<div class="c nm">${p[0]}</div>`;
                } else if (c[0] === 'AD') {
                    html += `<div class="c n">${p[1].AD ? p[1].AD.toFixed(2) : ''}</div>`;
                } else {
                    html += `<div class="c n">${(p[1][c[0]] || 0).toFixed(2)}</div>`;
                }
            });
        });

        html += '<div class="rh">23</div>';
        cols.forEach(() => { html += '<div class="c"></div>'; });

        this.shadowRoot.innerHTML = `
            <style>
            :host { display: block; flex: 1; min-width: 0; overflow: hidden; position: relative; background: #fff; }
            .grid { display: grid; grid-template-columns: 26px ${cols.map(c => c[1] + 'px').join(' ')}; grid-template-rows: 19px 20px 20px 20px 79px repeat(19, 20px); width: max-content; font: bold 10.500px Lato, sans-serif; color: #000; }
            .grid > div { box-sizing: border-box; white-space: nowrap; }
            .c { border-right: 1px solid #d4d4d4; border-bottom: 1px solid #d4d4d4; display: flex; align-items: center; overflow: visible; }
            .corner { background: linear-gradient(135deg, #cfd2d5 50%, #a2a6aa 50%); border: solid #dfe3e8; border-width: 1px 3px 3px 2px; border-bottom-color: #9ea3a9; box-shadow: inset 0 0 0 1px #b9bcc0; }
            .ch, .rh { display: flex; align-items: center; justify-content: center; background: #dfe3e8; font: 13px Lato, sans-serif; color: #50555b; border-right: 1px solid #b0b5bb; border-bottom: 1px solid #b0b5bb; }
            .ch { border-bottom-color: #9ea3a9; padding-top: 1px; }
            .rh { border-right-color: #9ea3a9; }
            .rh4 { align-items: flex-end; padding-bottom: 1px; }
            .sel { background: linear-gradient(#fbe29a, #f2c257); border-color: #c29b3f; color: #47433a; }
            .t1, .t2 { font: bold 11px "DejaVu Sans", sans-serif; letter-spacing: .2px; color: #0000cc; }
            .t1 { padding-left: 3px; padding-top: 5px; }
            .t2 { padding-left: 577px; padding-top: 2px; }
            .t3 { padding-left: 2px; padding-top: 5px; font-size: 10px; }
            .n { justify-content: flex-end; padding-right: 2px; padding-top: 2px; }
            .nm { padding-left: 2px; padding-top: 2px; font-size: 10px; letter-spacing: -.45px; }
            .nh { padding-left: 2px; align-items: flex-end; padding-bottom: 3px; }
            .hd { justify-content: flex-end; align-items: flex-end; padding: 0 1px 3px 0; }
            .rot { writing-mode: vertical-rl; transform: rotate(180deg); font: 10.500px/17px "Liberation Sans", sans-serif; }
            .id { font: 9.500px/17px Lato, sans-serif; }
            .cursor { position: absolute; left: 25px; top: 19px; width: 42px; height: 22px; box-sizing: border-box; border: 2px solid #000; pointer-events: none; }
            .cursor::after { content: ''; position: absolute; right: -3px; bottom: -3px; width: 4px; height: 4px; background: #000; border: 1px solid #fff; }
            </style>
            <div class="grid">${html}</div>
            <div class="cursor"></div>
        `;
    }
}

class VScroll extends Base {
    render() {
        this.shadowRoot.innerHTML = `
            <style>
            :host { display: flex; flex-direction: column; align-items: center; flex: none; width: 20px; background: #dde1e8; box-sizing: border-box; }
            .split { width: 16px; height: 7px; margin-top: 1px; background: linear-gradient(#fafbfc, #cdd1d7); border: 1px solid #8f959c; box-sizing: border-box; display: flex; justify-content: center; align-items: center; }
            .split i { width: 7px; height: 1px; background: #555; }
            .arr { display: flex; align-items: center; justify-content: center; height: 16px; }
            .up { width: 0; height: 0; border: 5px solid transparent; border-bottom: 5px solid #555; border-top: 0; }
            .dn { width: 0; height: 0; border: 5px solid transparent; border-top: 5px solid #666; border-bottom: 0; }
            .thumb { width: 16px; height: 70px; margin-top: 1px; box-sizing: border-box; background: linear-gradient(90deg, #fbfcfd, #e6e9ee); border: 1px solid #8f959c; border-radius: 2px; display: flex; flex-direction: column; align-items: center; justify-content: center; gap: 1px; flex: none; }
            .thumb i { width: 7px; height: 1px; background: #8a8f96; }
            .fill { flex: 1; }
            </style>
            <div class="split"><i></i></div>
            <div class="arr"><b class="up"></b></div>
            <div class="thumb"><i></i><i></i><i></i></div>
            <div class="fill"></div>
            <div class="arr"><b class="dn"></b></div>
        `;
    }
}

class SheetBar extends Base {
    render() {
        const nav = (d, bar) => svg(8, 9, `${bar === 'l' ? '<rect x="0" y="1" width="1.500" height="7" fill="#444"/>' : ''}${bar === 'r' ? '<rect x="6.500" y="1" width="1.500" height="7" fill="#444"/>' : ''}<path d="${d}" fill="#444"/>`);
        this.shadowRoot.innerHTML = `
            <style>
            :host { display: flex; align-items: stretch; height: 16px; box-sizing: border-box; background: #dfe3e8; border-top: 1px solid #9ea3a9; }
            .nav { display: flex; align-items: center; width: 62px; flex: none; padding-left: 5px; box-sizing: border-box; gap: 6.500px; border-right: 1px solid #aab0b6; }
            .tab { display: flex; align-items: center; justify-content: center; flex: none; width: 81px; margin-top: -1px; background: linear-gradient(#fff, #f5f6f8); border-bottom: 1px solid #9ea3a9; font: bold 14px Lato, sans-serif; color: #46546a; clip-path: polygon(0 0, 100% 0, 96% 100%, 3% 100%); box-sizing: border-box; }
            .add { display: flex; align-items: center; justify-content: center; flex: none; width: 42px; }
            .sp { flex: 1; }
            .larr { display: flex; align-items: center; justify-content: center; width: 14px; flex: none; }
            .thumb { width: 458px; flex: none; margin-bottom: 1px; background: linear-gradient(#eef0f3, #f7f8fa); border-right: 1px solid #8f959c; border-left: 1px solid #8f959c; border-bottom: 1px solid #8f959c; border-radius: 0 0 3px 3px; display: flex; align-items: center; justify-content: center; gap: 1px; box-sizing: border-box; }
            .thumb i { width: 1px; height: 7px; background: #8a8f96; }
            .rarr { display: flex; align-items: center; justify-content: flex-end; width: 47px; padding-right: 6px; box-sizing: border-box; flex: none; }
            .spl { width: 8px; height: 14px; flex: none; background: #f7f8fa; border: 1px solid #8f959c; box-sizing: border-box; display: flex; align-items: center; justify-content: center; margin-right: 20px; }
            .spl i { width: 1px; height: 8px; background: #666; }
            </style>
            <div class="nav">${nav('M8 1V8L3 4.500Z', 'l')}${nav('M6 1V8L1 4.500Z')}${nav('M2 1V8L7 4.500Z')}${nav('M0 1V8L5 4.500Z', 'r')}</div>
            <div class="tab">Productos</div>
            <div class="add">${svg(42, 15, `<path d="M.5 15 8 .5H41.500L34 15" fill="#e6e9ee" stroke="#a5abb2"/><rect x="14" y="5" width="10" height="8" rx="1" fill="#dfe7f3" stroke="#4f6c92"/><path d="M15 2.500 16 5 18.500 5.500 16 6.500 15 9 14 6.500 11.500 5.500 14 5Z" fill="#f2b21c"/>`)}</div>
            <div class="sp"></div>
            <div class="larr">${svg(6, 9, '<path d="M5 0V9L0 4.500Z" fill="#777"/>')}</div>
            <div class="thumb"><i></i><i></i><i></i><i></i></div>
            <div class="rarr">${svg(6, 11, '<path d="M0 0V11L6 5.500Z" fill="#555"/>')}</div>
            <div class="spl"><i></i></div>
        `;
    }
}

class StatusBar extends Base {
    render() {
        this.shadowRoot.innerHTML = `
            <style>
            :host { display: flex; align-items: center; height: 22px; box-sizing: border-box; background: linear-gradient(#f3f4f6, #d7dade 50%, #c7cbd0); border-top: 1px solid #fff; font: 11px ${UI_FONT}; color: #444; }
            .sep { width: 1px; height: 18px; background: #a2a6ab; box-shadow: 1px 0 #f5f5f5; flex: none; }
            .v { display: flex; align-items: center; justify-content: center; height: 19px; box-sizing: border-box; flex: none; }
            .on { background: ${HOT}; border: 1px solid #c2a04a; border-radius: 2px; }
            .slider { position: relative; width: 101px; height: 16px; flex: none; background: linear-gradient(#8f8f8f, #8f8f8f) center/100% 1px no-repeat; display: flex; justify-content: center; }
            .rnd { width: 16px; height: 16px; box-sizing: border-box; border: 1px solid #7b8087; border-radius: 50%; background: linear-gradient(#fff, #d4d7db); display: flex; align-items: center; justify-content: center; flex: none; }
            .pct { color: #4c4866; width: 27px; flex: none; margin: 0 8px 0 10px; white-space: nowrap; }
            </style>
            <span style="margin-left:8px;width:33px;flex:none">Listo</span>
            <div class="sep"></div>
            <span style="margin:0 9px;display:flex">${ICONS.macro}</span>
            <div class="sep"></div>
            <div class="sep" style="margin-left:auto;margin-right:5px"></div>
            <div class="v on" style="width:18px">${ICONS.viewNormal}</div>
            <div class="v" style="width:20px;margin-left:2px">${ICONS.viewLayout}</div>
            <div class="v" style="width:16px">${ICONS.viewBreak}</div>
            <span class="pct">100%</span>
            <div class="rnd">${svg(8, 2, '<rect width="8" height="2" fill="#555"/>')}</div>
            <div class="slider">${svg(9, 14, '<path d="M.5 .5H8.500V9L4.500 13.500 .5 9Z" fill="#eceef1" stroke="#7b8087"/>')}</div>
            <div class="rnd" style="margin-right:3px">${svg(8, 8, '<path d="M0 4H8M4 0V8" stroke="#555" stroke-width="2"/>')}</div>
        `;
    }
}

class TaskButton extends Base {
    render() {
        const on = this.hasAttribute('active');
        this.shadowRoot.innerHTML = `
            <style>
            :host { display: flex; align-items: center; justify-content: center; box-sizing: border-box; width: 60px; height: 38px; flex: none; border: 1px solid ${on ? '#eef5f5' : '#7fa9ad'}; background: ${on ? 'linear-gradient(#a9c6c8, #8fb3b6)' : 'linear-gradient(#75a0a4, #659498)'}; }
            </style>
            ${ICONS[this.getAttribute('icon')]}
        `;
    }
}

class TaskBar extends Base {
    render() {
        const apps = ['ie', 'firefox', 'folder', 'dbtools', 'vs', 'palette', 'squares', 'xlsBig'];
        this.shadowRoot.innerHTML = `
            <style>
            :host { display: flex; align-items: center; height: 40px; padding-left: 16px; box-sizing: border-box; background: linear-gradient(#518e93, #437f85); border-top: 1px solid #3c6f74; color: #fff; }
            .apps { display: flex; gap: 2px; }
            .tray { display: flex; align-items: center; margin-left: auto; }
            .clock { width: 92px; text-align: center; font: 11px/17px ${UI_FONT}; color: #f0f5f5; margin-right: 9px; }
            .arrow { width: 0; height: 0; border: 4px solid transparent; border-bottom: 4px solid #fff; border-top: 0; }
            </style>
            <div class="apps">${apps.map(a => `<x-task icon="${a}"${a === 'xlsBig' ? ' active' : ''}></x-task>`).join('')}</div>
            <div class="tray">
                <b class="arrow"></b>
                <span style="display:flex;margin-left:12px">${ICONS.trayFlag}</span>
                <span style="display:flex;margin-left:9px">${ICONS.trayPower}</span>
                <span style="display:flex;margin-left:8px">${ICONS.traySignal}</span>
                <div class="clock">6:56<br>06/09/2013</div>
            </div>
        `;
    }
}

class AppWindow extends Base {
    render() {
        this.shadowRoot.innerHTML = `
            <style>
            :host { display: flex; flex-direction: column; width: 1366px; height: 768px; overflow: hidden; }
            .chrome { background: linear-gradient(#5fafba, #8cc6cd 45%, #e6f0f2); height: 48px; flex: none; }
            .work { display: flex; height: 526px; flex: none; }
            </style>
            <div class="chrome"><x-titlebar></x-titlebar><x-tabs></x-tabs></div>
            <x-ribbon></x-ribbon>
            <x-formula></x-formula>
            <div class="work"><x-sheet></x-sheet><x-vscroll></x-vscroll></div>
            <x-sheetbar></x-sheetbar>
            <x-status></x-status>
            <x-taskbar></x-taskbar>
        `;
    }
}

customElements.define('x-titlebar', TitleBar);
customElements.define('x-tabs', RibbonTabs);
customElements.define('x-group', RibbonGroup);
customElements.define('x-large', LargeButton);
customElements.define('x-small', SmallButton);
customElements.define('x-tool', Tool);
customElements.define('x-caret', Caret);
customElements.define('x-combo', Combo);
customElements.define('x-merge', MergeButton);
customElements.define('x-ribbon', Ribbon);
customElements.define('x-formula', FormulaBar);
customElements.define('x-sheet', Sheet);
customElements.define('x-vscroll', VScroll);
customElements.define('x-sheetbar', SheetBar);
customElements.define('x-status', StatusBar);
customElements.define('x-task', TaskButton);
customElements.define('x-taskbar', TaskBar);
customElements.define('x-window', AppWindow);
</script>
</body>
</html>
